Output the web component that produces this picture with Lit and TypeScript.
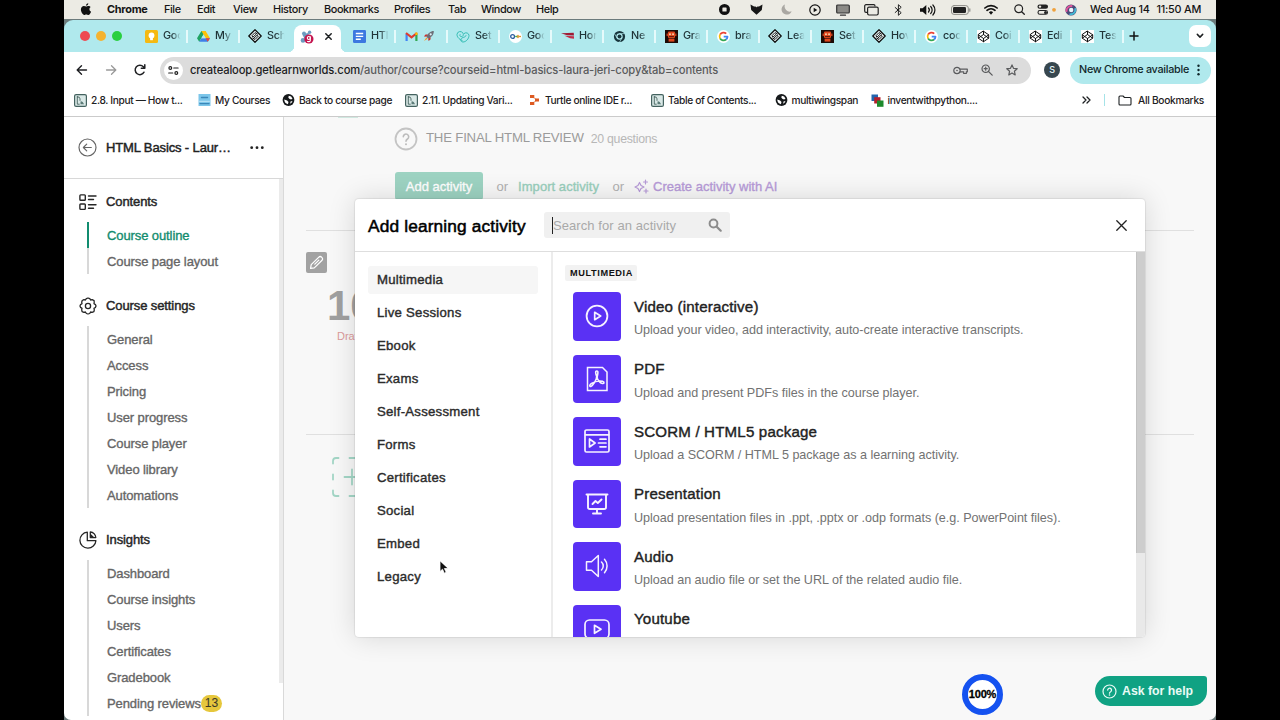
import { LitElement, html, css, svg, nothing } from "lit";
import { customElement } from "lit/decorators.js";
import { classMap } from "lit/directives/class-map.js";

const icon = (w: number, h: number, box: string, body: unknown) =>
  html`<svg width=${w} height=${h} viewBox=${box} fill="none" stroke="currentColor" stroke-linecap="round" stroke-linejoin="round">${body}</svg>`;

/* ---------- favicons ---------- */
const diamond = icon(14, 14, "0 0 14 14", svg`<path d="M7 .8 13.200 7 7 13.200.8 7Z" stroke="#111" stroke-width="1.300" fill="#f4feff"/><path d="M9.300 5.100 7 3.600 3.800 6.900 5 8.100 8 5.300M4.700 9 7 10.500 10.300 7.100 9.200 6.100 6.300 8.800" stroke="#111" stroke-width="1"/>`);
const google = icon(13, 13, "0 0 13 13", svg`<circle cx="6.5" cy="6.5" r="6.5" fill="#fff" stroke="none"/><g stroke-width="1.8" stroke-linecap="butt"><path d="M9.2 3.6A4 4 0 0 0 3.1 4.5" stroke="#ea4335"/><path d="M3.1 4.5a4 4 0 0 0 0 4" stroke="#fbbc05"/><path d="M3.1 8.5a4 4 0 0 0 6 1" stroke="#34a853"/><path d="M9.1 9.5a4 4 0 0 0 1.4-2.9H6.7" stroke="#4285f4"/></g>`);
const codepen = icon(13, 13, "0 0 13 13", svg`<rect width="13" height="13" fill="#fff" stroke="none"/><path d="M6.500 1.300 11.700 4.800v3.400L6.500 11.700 1.300 8.200V4.800ZM6.500 1.300v3.200M6.500 8.500v3.200M1.300 4.800l5.200 3.700L11.700 4.800M1.300 8.200l5.200-3.700 5.200 3.700" stroke="#111" stroke-width="1"/>`);
const robot = icon(13, 13, "0 0 13 13", svg`<rect width="13" height="13" fill="#1c0b06" stroke="none"/><g stroke="none" fill="#e0481e"><rect x="3" y="1.6" width="7" height="6.4" rx="1"/><rect x="1.6" y="3.5" width="1.2" height="2.6"/><rect x="10.2" y="3.5" width="1.2" height="2.6"/><rect x="3.6" y="8.6" width="5.8" height="3"/></g><rect x="4.1" y="3.4" width="1.7" height="1.7" fill="#f5d9b0" stroke="none"/><rect x="7.2" y="3.4" width="1.7" height="1.7" fill="#f5d9b0" stroke="none"/><path d="M4.4 6.6h4.2" stroke="#3a0f05" stroke-width=".8"/>`);
const keep = icon(13, 13, "0 0 13 13", svg`<rect width="13" height="13" rx="1.5" fill="#f5b912" stroke="none"/><circle cx="6.5" cy="5.4" r="2.9" fill="#fff" stroke="none"/><rect x="5.1" y="7.6" width="2.8" height="2.6" fill="#fff" stroke="none"/>`);
const drive = icon(13, 13, "0 0 13 13", svg`<g stroke="none"><path d="M4.4 1h4.2L4.3 8.2 2.2 11.8 0 8.2Z" fill="#1fa463"/><path d="M4.4 1h4.2L13 8.2H8.8Z" fill="#ffc107"/><path d="M4.4 8.2H13l-2.2 3.6H2.2Z" fill="#3f7ee8"/><path d="M10.8 11.8 8.7 8.2H13Z" fill="#ea4335"/><path d="M6.5 4.6 4.4 8.2h4.2Z" fill="#b0e9ed"/></g>`);
const loopMark = icon(14, 14, "0 0 14 14", svg`<g stroke="none"><circle cx="4" cy="3.3" r="1.9" fill="#6c9bc0"/><circle cx="9.6" cy="2.2" r="1.7" fill="#6c9bc0"/><path d="M2.2 4.6 9 2.8 8.4 6 4.8 9Z" fill="#6c9bc0"/><circle cx="3" cy="10.4" r="2.3" fill="#6c9bc0"/><circle cx="8.9" cy="9" r="4.6" fill="#c4154f"/></g><circle cx="8.8" cy="8" r="1.5" stroke="#fff" stroke-width="1.1"/><path d="M10.3 6.8v3.6q0 1.6-2.8 1.1" stroke="#fff" stroke-width="1.1"/>`);
const docs = icon(13, 13, "0 0 13 13", svg`<rect width="13" height="13" rx="1.2" fill="#3c78e0" stroke="none"/><path d="M2.8 3.5h7.4M2.8 6.4h7.4M2.8 9.3h5" stroke="#fff" stroke-width="1.4" stroke-linecap="butt"/>`);
const gmail = icon(13, 11, "0 0 13 11", svg`<g stroke-width="2.2" stroke-linecap="butt" stroke-linejoin="miter"><path d="M1.6 9.9V3" stroke="#4285f4"/><path d="M11.4 9.9V3" stroke="#34a853"/><path d="m1 2 5.5 4.4L12 2" stroke="#e03b2f"/><path d="M11.4 4V1.6" stroke="#fbbc04"/></g>`);
const rings = icon(14, 13, "0 0 14 13", svg`<g stroke="#35bcb4" stroke-width="1"><path d="M6.2 10.6C2.5 9 .9 6.600 1 4.400A3.200 3.200 0 0 1 7 3.200c.9 1.900-.1 3.400-1.700 3.400-1.300 0-1.800-1.100-1.300-2"/><path d="M8.200 3.400A3 3 0 0 1 13 5.400c0 3.200-2.900 6.600-6 6.600-2.300 0-2.900-2.600-1.200-3.900C7.700 6.800 9.300 7.600 10 5.600"/></g>`);
const keyFav = icon(13, 13, "0 0 13 13", svg`<circle cx="6.500" cy="6.500" r="6.500" fill="#fff" stroke="none"/><circle cx="3.600" cy="6.500" r="1.900" stroke="#2d5f9e" stroke-width="1.300"/><path d="M6.800 6.500h1.900" stroke="#4caf50" stroke-width="1.500"/><path d="M9 5.500v2M10.700 6.500h.6" stroke="#e0962d" stroke-width="1.600"/>`);
const flag = icon(13, 8, "0 0 13 8", svg`<path d="M0 1.200 12.700.8 13 3.400 6 3.200Z" fill="#a01c35" stroke="none"/><path d="M3.500 3.700 13 4.200v2.600L9 6.200Z" fill="#c2304a" stroke="none"/>`);
const chrome = icon(13, 13, "0 0 13 13", svg`<circle cx="6.500" cy="6.500" r="4.400" stroke="#18353c" stroke-width="2.400"/><circle cx="6.500" cy="6.500" r="2" fill="#18353c" stroke="none"/><path d="M6.500 3.600h4.700M4 7.900 1.800 4.200M9 7.900l-2.300 3.900" stroke="#b0e9ed" stroke-width=".7"/>`);
const rocket = icon(12, 12, "0 0 12 12", svg`<g stroke="none"><path d="M10.800 1C7.500 1 4.600 3.600 3.300 6.700l2 2C8.400 7.400 11 4.500 10.800 1Z" fill="#6d6f78"/><path d="M4.600 4.200 2 4.800 1.200 6.800l2.300-.2ZM7.800 7.400 7.200 10l-2 .8.2-2.300Z" fill="#c9302c"/><path d="m3.300 7.400 1.400 1.400L1 11Z" fill="#f39b2b"/><circle cx="7.700" cy="4.300" r="1.100" fill="#dff3fa"/></g>`);

interface Tab { fav: unknown; label: unknown; active?: boolean; sep?: boolean; }
const TABS: Tab[] = [
  { fav: keep, label: "Goo", sep: true },
  { fav: drive, label: "My", sep: true },
  { fav: diamond, label: "Sch" },
  { fav: loopMark, label: "", active: true },
  { fav: docs, label: "HTI", sep: true },
  { fav: gmail, label: rocket, sep: true },
  { fav: rings, label: "Set", sep: true },
  { fav: keyFav, label: "Goo", sep: true },
  { fav: flag, label: "Hor", sep: true },
  { fav: chrome, label: "Ne", sep: true },
  { fav: robot, label: "Gra", sep: true },
  { fav: google, label: "bra", sep: true },
  { fav: diamond, label: "Lea", sep: true },
  { fav: robot, label: "Set", sep: true },
  { fav: diamond, label: "Hov", sep: true },
  { fav: google, label: "coc", sep: true },
  { fav: codepen, label: "Coi", sep: true },
  { fav: codepen, label: "Edi", sep: true },
  { fav: codepen, label: "Tes", sep: true },
];

/* ---------- menu bar ---------- */
const MENUS: [string, number][] = [["Chrome", 57], ["File", 33], ["Edit", 36], ["View", 40], ["History", 51], ["Bookmarks", 70], ["Profiles", 54], ["Tab", 33], ["Window", 55], ["Help", 30]];

const STATUS: [unknown, number][] = [
  [icon(11, 11, "0 0 11 11", svg`<circle cx="5.500" cy="5.500" r="5.500" fill="#111" stroke="none"/><rect x="3.400" y="3.400" width="4.200" height="4.200" rx=".6" fill="#eceae3" stroke="none"/>`), 31],
  [icon(13, 11, "0 0 13 11", svg`<path d="M.5.500 4 2.600h5L12.500.500 11.800 6 6.500 10.800 1.200 6Z" fill="#161616" stroke="none"/><path d="M4.200 0 6.500 3.500 8.800 0Z" fill="#eceae3" stroke="none"/>`), 31],
  [icon(11, 11, "0 0 11 11", svg`<path d="M4 .5a5.200 5.200 0 1 0 6.600 6.800A5.200 5.200 0 0 1 4 .500Z" fill="#aaa8a3" stroke="none"/>`), 28],
  [icon(12, 12, "0 0 12 12", svg`<circle cx="6" cy="6" r="5.200" stroke="#111" stroke-width="1.200"/><path d="M4.700 3.700v4.600L8.300 6Z" fill="#111" stroke="none"/>`), 27],
  [icon(14, 12, "0 0 14 12", svg`<rect x=".7" y="1" width="12.600" height="8" rx="1" stroke="#333" stroke-width="1.200" fill="#8b8a86"/><path d="M4.500 11.200h5" stroke="#333" stroke-width="1.200"/>`), 28],
  [icon(15, 12, "0 0 15 12", svg`<path d="M3 8.400H2A1.300 1.300 0 0 1 .7 7.100V2A1.300 1.300 0 0 1 2 .7h7.800A1.300 1.300 0 0 1 11 2" stroke="#222" stroke-width="1.200"/><rect x="3.600" y="3.200" width="10.600" height="7.800" rx="1.400" stroke="#222" stroke-width="1.200"/>`), 30],
  [icon(9, 12, "0 0 9 12", svg`<path d="M1.200 3.500 7.200 8.700 4.400 11.300V.7L7.200 3.300 1.200 8.500" stroke="#222" stroke-width="1"/>`), 26],
  [icon(16, 12, "0 0 16 12", svg`<path d="M0 4.200h2.600L6.300 1v10L2.600 7.800H0Z" fill="#111" stroke="none"/><path d="M8.500 4a3 3 0 0 1 0 4M10.700 2.500a5 5 0 0 1 0 7M12.900 1a7.200 7.200 0 0 1 0 10" stroke="#111" stroke-width="1.200"/>`), 31],
  [icon(20, 10, "0 0 20 10", svg`<rect x=".5" y=".6" width="16.800" height="8.800" rx="2.500" stroke="#8d8c87" stroke-width="1"/><rect x="2" y="2" width="13" height="6" rx="1.300" fill="#222" stroke="none"/><path d="M18.800 3.800v2.400" stroke="#8d8c87" stroke-width="1.200"/>`), 33],
  [icon(14, 11, "0 0 14 11", svg`<path d="M.9 4A9 9 0 0 1 13.100 4M3 6.300a6 6 0 0 1 8 0" stroke="#111" stroke-width="1.700"/><path d="M4.900 8.200a3.300 3.300 0 0 1 4.200 0L7 10.700Z" fill="#111" stroke="none"/>`), 30],
  [icon(11, 11, "0 0 11 11", svg`<circle cx="4.700" cy="4.700" r="3.900" stroke="#222" stroke-width="1.200"/><path d="m7.700 7.700 2.600 2.600" stroke="#222" stroke-width="1.300"/>`), 23],
  [icon(20, 11, "0 0 20 11", svg`<rect x=".5" y=".5" width="10.500" height="4.300" rx="2.100" fill="#222" stroke="none"/><circle cx="3" cy="2.600" r="1.200" fill="#eceae3" stroke="none"/><rect x="1" y="6.500" width="9.500" height="3.800" rx="1.900" stroke="#222" stroke-width="1.100"/><circle cx="8.500" cy="8.400" r="1.500" fill="#222" stroke="none"/><circle cx="17" cy="5.800" r="1.900" fill="#f0a13c" stroke="none"/>`), 28],
  [icon(12, 12, "0 0 12 12", svg`<circle cx="6" cy="6" r="5.600" fill="#4d4a78" stroke="none"/><path d="M1.500 7a4.700 4.700 0 0 1 5-5" stroke="#e0559a" stroke-width="2"/><path d="M10.300 5a4.600 4.600 0 0 1-5 5.300" stroke="#43b9d4" stroke-width="2"/><circle cx="6.200" cy="6" r="2.200" fill="#e9f4fb" stroke="none"/>`), 25],
];

/* ---------- bookmarks ---------- */
const runestone = icon(13, 13, "0 0 13 13", svg`<rect x=".6" y=".6" width="11.800" height="11.800" rx="1.500" stroke="#44625f" stroke-width="1.200" fill="#d9e8e6"/><path d="M3.300 2.600v7.600h2M3.300 2.800q2.500-.4 2.700 2v1.600" stroke="#33504d" stroke-width=".8"/><path d="M6.500 10.300V7.500q2 -.8 3.600 2.800Z" fill="#5d7c79" stroke="none"/>`);
const courses = icon(12, 12, "0 0 12 12", svg`<rect width="12" height="12" fill="#7cc6ea" stroke="none"/><path d="M3 3.500h6M1.500 9.600h9" stroke="#3a86b8" stroke-width="1.400"/><path d="M1 7.300h10" stroke="#c9e9f8" stroke-width=".9"/>`);
const globe = icon(12, 12, "0 0 12 12", svg`<circle cx="6" cy="6" r="5.900" fill="#16191b" stroke="none"/><path d="M6.300 1.800q2.800.2 3.700 3l-1.500.8-1.700-.9-1-1.300ZM1.700 5.600l2.900.8 1.400 1.500-.6 2.400Q2 9.500 1.700 5.600ZM8 7.500l2-.4q-.7 2-2.300 2.700Z" fill="#fff" stroke="none"/>`);
const turtle = icon(11, 12, "0 0 11 12", svg`<path d="M2.500 2.500 8.500 6 2.500 9.500" stroke="#e9a27c" stroke-width="1"/><g fill="#dd5a22" stroke="none"><rect x="1" y="1" width="4.300" height="3"/><rect x="6" y="4.500" width="4" height="3"/><rect x="1" y="8" width="4.300" height="3"/></g>`);
const blocks = icon(13, 13, "0 0 13 13", svg`<g stroke="none"><rect x=".5" y=".5" width="6.500" height="6.500" fill="#2465ad"/><rect x="3.200" y="3.200" width="6.300" height="6.300" fill="#b3202b"/><rect x="6" y="6.500" width="6.500" height="6.300" fill="#1d8a2c"/></g>`);
const BOOKMARKS: [unknown, string, number][] = [
  [runestone, "2.8. Input — How t...", 124],
  [courses, "My Courses", 84],
  [globe, "Back to course page", 123],
  [runestone, "2.11. Updating Vari...", 123],
  [turtle, "Turtle online IDE r...", 123],
  [runestone, "Table of Contents...", 123.5],
  [globe, "multiwingspan", 96],
  [blocks, "inventwithpython....", 130],
];

/* ---------- sidebar ---------- */
const SECTIONS = [
  {
    title: "Contents",
    icon: icon(18, 17, "0 0 18 17", svg`<g stroke-width="1.400"><rect x=".9" y=".9" width="5.400" height="5.400" rx=".8"/><rect x=".9" y="10" width="5.400" height="5.400" rx=".8"/><path d="M9.500 2H17M9.500 5.500h5M9.500 10.800H17M9.500 14.300h5"/></g>`),
    items: ["Course outline", "Course page layout"],
  },
  {
    title: "Course settings",
    icon: icon(18, 18, "0 0 18 18", svg`<path d="M9 1 10.800 1.700 11.600 3 13.200 2.700 15.100 3.700 15.200 5.500 15 6.700 16.500 7.600 17 9 16.400 10.500 15 11.400 15.300 12.800 14.900 14.600 13.100 15.300 11.600 15 10.700 16.500 9 17 7.400 16.500 6.400 15 4.900 15.300 3.100 14.600 2.700 12.800 3 11.400 1.500 10.400 1 9 1.500 7.600 3 6.700 2.700 5.200 3.200 3.500 4.900 2.700 6.400 3 7.300 1.600Z" stroke-width="1.300"/><circle cx="9" cy="9" r="2.600" stroke-width="1.300"/>`),
    items: ["General", "Access", "Pricing", "User progress", "Course player", "Video library", "Automations"],
  },
  {
    title: "Insights",
    icon: icon(18, 18, "0 0 18 18", svg`<path d="M8.300 1.200A8 8 0 1 0 16.900 9.700H8.300Z" stroke-width="1.300"/><path d="M11.300 1v5.600h5.500A6 6 0 0 0 11.300 1ZM11.300 3.500l3.200 3" stroke-width="1.300"/>`),
    items: ["Dashboard", "Course insights", "Users", "Certificates", "Gradebook", "Pending reviews"],
  },
];

/* ---------- modal ---------- */
const CATEGORIES = ["Multimedia", "Live Sessions", "Ebook", "Exams", "Self-Assessment", "Forms", "Certificates", "Social", "Embed", "Legacy"];
const big = (body: unknown) => icon(26, 26, "0 0 26 26", body);
const ACTIVITIES: [string, string, unknown][] = [
  ["Video (interactive)", "Upload your video, add interactivity, auto-create interactive transcripts.", big(svg`<circle cx="13" cy="13" r="10.400" stroke-width="1.800"/><path d="M10.700 9.300v7.400l6-3.700Z" stroke-width="1.700"/>`)],
  ["PDF", "Upload and present PDFs files in the course player.", big(svg`<path d="M3.500 1.500H18.500L23 6V24.500H3.500Z" stroke-width="1.500" stroke-linejoin="miter"/><path d="M12.800 5c-1.700 0-1.200 3-.1 5.500.3 3-4 9.300-5.800 9.900-1.500.4-1.700-1.500.6-2.900 3-1.800 8.200-2.900 11-2.200 2.300.6 1.700 2.500-.2 2.200-2.400-.4-5.200-4-5.200-6.400C13.800 8 14.600 5 12.800 5Z" stroke-width="1.600"/>`)],
  ["SCORM / HTML5 package", "Upload a SCORM / HTML 5 package as a learning activity.", big(svg`<rect x="1" y="2" width="24" height="22" rx="1.500" stroke-width="1.700"/><path d="M1.500 6.800h23" stroke-width="1.800"/><path d="M5.500 11v8l5.600-4Z" stroke-width="1.700"/><path d="M16 11.200h6M14.500 15h7.500M16 18.800h6" stroke-width="1.700"/>`)],
  ["Presentation", "Upload presentation files in .ppt, .pptx or .odp formats (e.g. PowerPoint files).", big(svg`<path d="M2.500 3.500h21M4 3.500v12.700q0 1.800 1.800 1.800h14.400q1.800 0 1.800-1.800V3.500M13 18v4M9 22.500h8" stroke-width="1.900"/><path d="m8.500 13 3-3 2.300 2L17.500 8.500" stroke-width="1.900"/>`)],
  ["Audio", "Upload an audio file or set the URL of the related audio file.", big(svg`<path d="M2.500 8.800h5L14.300 2.500v21L7.500 17.200h-5Z" stroke-width="1.500"/><path d="M17.500 9a5.500 5.500 0 0 1 0 8M20.500 6.300a10 10 0 0 1 0 13.400" stroke-width="1.500"/>`)],
  ["Youtube", "", big(svg`<rect x="1" y="4" width="24" height="18.500" rx="4.500" stroke-width="1.700"/><path d="M10.500 9.300v8l6.500-4Z" stroke-width="1.700"/>`)],
];

@customElement("mac-menubar")
class MacMenubar extends LitElement {
  static styles = css`
    :host { display: flex; align-items: center; height: 19px; background: #ecebe4; color: #151515; font: 500 10.900px/19px Inter, "Liberation Sans", sans-serif; letter-spacing: -0.400px; white-space: nowrap; flex: none; border-bottom: 1px solid #6c7b7c; }
    .apple { width: 43px; padding-left: 15.500px; box-sizing: border-box; display: flex; }
    .menu { flex: none; }
    .menu.app { font-weight: 700; letter-spacing: -0.250px; }
    .status { display: flex; margin-left: auto; }
    .cell { display: flex; align-items: center; flex: none; }
    .clock { width: 126px; font-size: 10.800px; letter-spacing: -0.180px; }
    .clock span { margin-left: 4px; }
  `;
  render() {
    return html`
      <span class="apple">${icon(12, 13, "0 0 12 13", svg`<path d="M8.300.3c.1 1.200-1 2.500-2.200 2.500C5.900 1.600 7 .4 8.300.300ZM6.200 3.500c.6 0 1.300-.6 2.300-.6.900 0 1.700.5 2.200 1.200-1.900 1.100-1.500 3.900.4 4.600-.5 1.400-1.500 3.200-2.700 3.200-.8 0-1.100-.5-2.100-.5s-1.300.5-2.100.500C2.700 11.900.9 9 .9 6.600c0-2.400 1.500-3.600 2.900-3.600 1 0 1.800.5 2.400.5Z" fill="#111" stroke="none"/>`)}</span>
      ${MENUS.map(([m, w], i) => html`<span class=${classMap({ menu: true, app: i === 0 })} style="width:${w}px">${m}</span>`)}
      <div class="status">
        ${STATUS.map(([g, w]) => html`<span class="cell" style="width:${w}px">${g}</span>`)}
        <span class="clock">Wed Aug 14 <span>11:50 AM</span></span>
      </div>`;
  }
}

@customElement("browser-chrome")
class BrowserChrome extends LitElement {
  static styles = css`
    :host { display: block; flex: none; font: 500 11px/14px Inter, "Liberation Sans", sans-serif; color: #1d2022; letter-spacing: -0.1px; white-space: nowrap; }
    svg { flex: none; display: block; }
    .strip { height: 32px; background: #b0e9ed; display: flex; align-items: center; }
    .lights { width: 72px; box-sizing: border-box; padding-left: 16px; display: flex; gap: 6px; }
    .light { width: 10px; height: 10px; border-radius: 50%; }
    .r { background: #ee4b52; } .y { background: #f5b32f; } .g { background: #29cf3f; }
    .tab { width: 52px; height: 32px; display: flex; align-items: center; box-sizing: border-box; padding-left: 8px; flex: none; }
    .fav { width: 14px; display: flex; justify-content: center; flex: none; }
    .label { width: 20px; margin-left: 5px; -webkit-mask-image: linear-gradient(90deg, #000 45%, transparent 88%); font-size: 10.800px; letter-spacing: -0.200px; color: #203438; }
    .label.pic { -webkit-mask-image: none; }
    .sep { width: 1.500px; height: 13px; margin-left: 3px; background: #e6fafb; }
    .tab.active { align-items: flex-end; padding-left: 0; }
    .shape { display: flex; align-items: center; height: 27px; width: 47px; margin-left: 2px; box-sizing: border-box; padding: 0 9px 4px 6px; justify-content: space-between; background: #fff; border-radius: 8px 8px 0 0; position: relative; }
    .shape::before, .shape::after { content: ""; position: absolute; bottom: 0; width: 6px; height: 6px; }
    .shape::before { left: -6px; background: radial-gradient(circle at 0 0, transparent 6px, #fff 6.500px); }
    .shape::after { right: -6px; background: radial-gradient(circle at 100% 0, transparent 6px, #fff 6.500px); }
    .plus { margin-left: 5px; }
    .chev { margin: 0 5px 0 auto; width: 22px; height: 22px; border-radius: 7px; background: #fff; display: flex; align-items: center; justify-content: center; }
    .bar { height: 36px; background: #fff; display: flex; align-items: center; color: #202124; }
    .nav { display: flex; width: 96px; box-sizing: border-box; padding-left: 12px; gap: 17px; align-items: center; }
    .omni { width: 871px; height: 27px; border-radius: 14px; background: #dcdcdc; display: flex; align-items: center; box-sizing: border-box; padding: 0 13px 0 4px; font-size: 11.200px; color: #5a5b5d; letter-spacing: -0.130px; }
    .site { width: 19px; height: 19px; border-radius: 50%; background: #fff; display: flex; align-items: center; justify-content: center; margin-right: 7px; color: #222; }
    .host { color: #1c1d1f; }
    .tools { margin-left: auto; display: flex; gap: 13px; align-items: center; }
    .avatar { width: 16px; height: 16px; margin-left: 13px; border-radius: 50%; background: #37474f; color: #e6f4f5; text-align: center; font-size: 9px; line-height: 16px; }
    .update { margin-left: 10px; width: 141px; height: 27px; border-radius: 14px; background: #b0e9ed; box-sizing: border-box; padding: 0 11px 0 9px; display: flex; align-items: center; justify-content: space-between; color: #10282b; font-size: 10.800px; letter-spacing: -0.270px; }
    .marks { height: 24px; background: #fff; border-bottom: 1px solid #cbcbcb; display: flex; align-items: center; padding: 0 0 4px 10px; font-size: 10.200px; letter-spacing: -0.350px; }
    .mark { display: flex; align-items: center; gap: 4px; flex: none; }
    .mark svg { width: 13px; }
    .line { width: 1.500px; height: 12px; background: #a5e3e8; margin: 0 13px; }
    .all { display: flex; align-items: center; gap: 6px; margin-right: 12px; letter-spacing: -0.300px; }
    .end { margin-left: auto; display: flex; align-items: center; }
  `;
  render() {
    return html`
      <div class="strip">
        <div class="lights"><i class="light r"></i><i class="light y"></i><i class="light g"></i></div>
        ${TABS.map((t) => t.active
          ? html`<div class="tab active"><div class="shape">${t.fav}${icon(7, 7, "0 0 7 7", svg`<path d="m.8.800 5.400 5.400M6.200.800.800 6.200" stroke-width="1.500"/>`)}</div></div>`
          : html`<div class="tab"><span class="fav">${t.fav}</span><span class=${classMap({ label: true, pic: typeof t.label !== "string" })}>${t.label}</span>${t.sep ? html`<i class="sep"></i>` : nothing}</div>`)}
        <span class="plus">${icon(10, 10, "0 0 10 10", svg`<path d="M5 1v8M1 5h8" stroke="#111" stroke-width="1.500"/>`)}</span>
        <span class="chev">${icon(8, 6, "0 0 8 6", svg`<path d="m1.300 1.400 2.700 2.700 2.700-2.700" stroke-width="1.500"/>`)}</span>
      </div>
      <div class="bar">
        <div class="nav">
          ${icon(12, 12, "0 0 12 12", svg`<path d="M10.500 6H1.500M5.500 1.700 1.200 6l4.300 4.300" stroke-width="1.400"/>`)}
          ${icon(12, 12, "0 0 12 12", svg`<path d="M1.500 6h9M6.500 1.700 10.800 6 6.500 10.300" stroke="#9a9a9a" stroke-width="1.300"/>`)}
          ${icon(12, 12, "0 0 12 12", svg`<path d="M10 8.200a4.700 4.700 0 1 1-.6-5.400l1.200 1.300M10.800.8v3.500H7.300" stroke-width="1.500"/>`)}
        </div>
        <div class="omni">
          <span class="site">${icon(11, 9, "0 0 11 9", svg`<circle cx="2.300" cy="2" r="1.400" stroke-width="1.200"/><path d="M5.800 2h4.300M.7 7h4" stroke-width="1.200"/><circle cx="8.300" cy="7" r="1.400" stroke-width="1.200"/>`)}</span>
          <span><span class="host">createaloop.getlearnworlds.com</span>/author/course?courseid=html-basics-laura-jeri-copy&amp;tab=contents</span>
          <span class="tools">
            ${icon(15, 9, "0 0 15 9", svg`<circle cx="4" cy="4.500" r="3.200" stroke-width="1.200"/><circle cx="4" cy="4.500" r=".8" fill="currentColor" stroke="none"/><path d="M7 3.200h7.300v2.600h-1v1.700h-2.600V5.800H7" stroke-width="1.200"/>`)}
            ${icon(12, 12, "0 0 12 12", svg`<circle cx="4.700" cy="4.700" r="3.700" stroke-width="1.200"/><path d="m7.500 7.500 3.700 3.700M3.200 4.700h3M4.700 3.200v3" stroke-width="1.200"/>`)}
            ${icon(12, 12, "0 0 12 12", svg`<path d="m6 .9 1.500 3.400 3.700.4-2.800 2.500.8 3.700L6 9l-3.200 1.900.8-3.700L.8 4.700l3.700-.4Z" stroke-width="1.200"/>`)}
          </span>
        </div>
        <span class="avatar">S</span>
        <span class="update">New Chrome available ${icon(3, 12, "0 0 3 12", svg`<g fill="currentColor" stroke="none"><circle cx="1.500" cy="1.700" r="1.200"/><circle cx="1.500" cy="6" r="1.200"/><circle cx="1.500" cy="10.300" r="1.200"/></g>`)}</span>
      </div>
      <div class="marks">
        ${BOOKMARKS.map(([g, t, w]) => html`<span class="mark" style="width:${w}px">${g}<span>${t}</span></span>`)}
        <span class="end">
          ${icon(9, 8, "0 0 9 8", svg`<path d="m1 1 3 3-3 3M5 1l3 3-3 3" stroke-width="1.300"/>`)}
          <i class="line"></i>
          <span class="all">${icon(14, 11, "0 0 14 11", svg`<path d="M1 9V2Q1 1 2 1H5l1.500 1.500H12q1 0 1 1V9q0 1-1 1H2Q1 10 1 9Z" stroke-width="1.100"/>`)}<span>All Bookmarks</span></span>
        </span>
      </div>`;
  }
}

@customElement("course-sidebar")
class CourseSidebar extends LitElement {
  static styles = css`
    :host { display: flex; flex-direction: column; width: 220px; box-sizing: border-box; flex: none; background: #fff; border-right: 1px solid #d9d9d9; font: 13px/26px "Liberation Sans", Arial, sans-serif; letter-spacing: -0.100px; white-space: nowrap; overflow: hidden; }
    svg { display: block; flex: none; }
    .head { height: 61px; border-bottom: 1px solid #d8d8d8; display: flex; align-items: center; padding: 0 19px 0 14px; color: #222; flex: none; }
    .name { margin-left: 9px; font-size: 13px; letter-spacing: -0.130px; -webkit-text-stroke: 0.450px #222; }
    .dots { margin-left: auto; }
    .body { flex: 1; display: flex; min-height: 0; }
    .nav { flex: 1; padding-top: 3px; }
    .track { width: 4px; height: 504px; background: #ebebeb; }
    .title { height: 40px; display: flex; align-items: center; padding-left: 15px; gap: 9px; color: #262626; -webkit-text-stroke: 0.450px #262626; font-size: 13px; }
    .title svg { width: 18px; }
    .list { margin: 0 0 12px 23px; }
    .item { height: 26px; box-sizing: border-box; padding-top: 1px; display: flex; align-items: center; border-left: 2px solid #d8d8d8; padding-left: 18px; color: #666; -webkit-text-stroke: 0.350px #666; }
    .item.on { border-color: #118c6f; color: #128c6e; -webkit-text-stroke-color: #128c6e; }
    .badge { background: #e6c73c; color: #3c3820; -webkit-text-stroke-width: 0.100px; border-radius: 9px; line-height: 17px; width: 21px; text-align: center; font-size: 12px; }
  `;
  render() {
    return html`
      <div class="head">
        ${icon(19, 19, "0 0 19 19", svg`<g stroke="#666"><circle cx="9.500" cy="9.500" r="8.500" stroke-width="1.200"/><path d="M13.300 9.500H5.700M8.700 6.200 5.400 9.500l3.300 3.300" stroke-width="1.200"/></g>`)}
        <span class="name">HTML Basics - Laur…</span>
        <span class="dots">${icon(14, 4, "0 0 14 4", svg`<g fill="#222" stroke="none"><circle cx="1.700" cy="1.700" r="1.400"/><circle cx="7" cy="1.700" r="1.400"/><circle cx="12.300" cy="1.700" r="1.400"/></g>`)}</span>
      </div>
      <div class="body">
        <div class="nav">
          ${SECTIONS.map((s) => html`
            <div class="title">${s.icon}<span>${s.title}</span></div>
            <div class="list">
              ${s.items.map((t) => html`<div class=${classMap({ item: true, on: t === "Course outline" })}>${t}${t === "Pending reviews" ? html`<span class="badge">13</span>` : nothing}</div>`)}
            </div>`)}
        </div>
        <div class="track"></div>
      </div>`;
  }
}

@customElement("course-outline")
class CourseOutline extends LitElement {
  static styles = css`
    :host { display: block; flex: 1; background: #f8f8f8; overflow: hidden; font: 13px/16px "Liberation Sans", Arial, sans-serif; white-space: nowrap; padding: 0 22px; }
    svg { display: block; flex: none; }
    .stub { height: 1px; width: 20px; margin-left: 32px; background: #cfe8e0; }
    .unit { display: flex; align-items: center; padding: 9px 0 0 88px; height: 24px; color: #9b9b9b; }
    .unit .t { margin-left: 8px; margin-top: -2px; font-size: 13.200px; letter-spacing: -0.190px; }
    .unit .n { margin-left: 7px; color: #b7b7b7; font-size: 12.300px; letter-spacing: -0.270px; margin-top: -1px; }
    .acts { display: flex; align-items: center; margin: 21px 0 0 89px; height: 28px; color: #b0b0b0; }
    .add { width: 88px; height: 28px; line-height: 29px; border-radius: 3px; background: #9dd3c2; color: #fff; text-align: center; -webkit-text-stroke: 0.350px #fff; }
    .or { margin: 1px 10px 0 13.500px; }
    .imp { margin-top: 1px; color: #99cfbc; -webkit-text-stroke: 0.350px #99cfbc; letter-spacing: 0.050px; }
    .ai { margin-top: 1px; color: #b79bd8; -webkit-text-stroke: 0.350px #b79bd8; display: flex; gap: 4px; align-items: center; }
    .hr { height: 1px; background: #e0e0e0; width: 888px; }
    .hr.first { margin-top: 30px; }
    .section { height: 203px; padding-top: 21px; box-sizing: border-box; }
    .pen { width: 21px; height: 21px; border-radius: 2px; background: #a2a2a2; color: #fff; display: flex; align-items: center; justify-content: center; }
    .num { padding-left: 21px; margin-top: 11px; font: 700 42px/44px "Liberation Sans", Arial, sans-serif; color: #a0a0a0; }
    .draft { padding-left: 31px; margin-top: 1px; font-size: 11px; line-height: 14px; color: #dc9b9b; }
    .new { padding: 22px 0 0 26px; }
  `;
  render() {
    return html`
      <div class="stub"></div>
      <div class="unit">
        ${icon(24, 24, "0 0 24 24", svg`<circle cx="12" cy="12" r="10.500" stroke="#c4c4c4" stroke-width="1.800"/><path d="M9.300 9.800a2.700 2.700 0 1 1 4.200 2.200q-1.500 1-1.500 2.300" stroke="#bcbcbc" stroke-width="1.600"/><circle cx="12" cy="17.200" r="1" fill="#bcbcbc" stroke="none"/>`)}
        <span class="t">THE FINAL HTML REVIEW</span><span class="n">20 questions</span>
      </div>
      <div class="acts">
        <span class="add">Add activity</span><span class="or">or</span><span class="imp">Import activity</span><span class="or">or</span>
        <span class="ai">${icon(15, 15, "0 0 15 15", svg`<path d="M5.500 3.500 7 6.500 10 8 7 9.500 5.500 12.500 4 9.500 1 8 4 6.500ZM11.500 1v4M9.500 3h4M12 10v4M10 12h4" stroke-width="1.200"/>`)}<span>Create activity with AI</span></span>
      </div>
      <div class="hr first"></div>
      <div class="section">
        <div class="pen">${icon(15, 15, "0 0 15 15", svg`<path d="M1.600 13.400 2.200 9.700 9.600 2.300a2.250 2.250 0 0 1 3.200 3.200L5.300 12.900ZM9.800 5.200 5.800 9.200" stroke-width="1.200"/>`)}</div>
        <div class="num">10</div>
        <div class="draft">Draft</div>
      </div>
      <div class="hr"></div>
      <div class="new">${icon(40, 40, "0 0 40 40", svg`<g stroke="#a3d6c6" stroke-width="1.800"><path d="M6.500 1H4Q1 1 1 4v2.500M1 17.500v5M1 33.500V36q0 3 3 3h2.500M17.500 1h5M17.500 39h5M12.500 20h15M20 12.500v15"/></g>`)}</div>`;
  }
}

@customElement("activity-dialog")
class ActivityDialog extends LitElement {
  static styles = css`
    :host { display: flex; flex-direction: column; position: absolute; left: 291px; top: 199px; width: 790px; height: 438px; background: #fff; border-radius: 4px; box-shadow: 0 0 1px 1px rgba(0,0,0,.07), 0 0 28px rgba(0,0,0,.14); overflow: hidden; font: 13px/16px "Liberation Sans", Arial, sans-serif; white-space: nowrap; color: #222; }
    svg { display: block; flex: none; }
    .head { height: 52px; border-bottom: 1px solid #dedede; display: flex; align-items: center; padding: 0 18px 0 13px; flex: none; }
    .title { font-size: 17.300px; line-height: 22px; margin-top: 2px; letter-spacing: 0.150px; color: #000; -webkit-text-stroke: 0.500px #000; width: 176px; }
    .search { width: 186px; height: 26px; background: #f0f0f0; border-radius: 3px; display: flex; align-items: center; box-sizing: border-box; padding: 0 8px 0 8px; color: #a9a9a9; font-size: 13px; letter-spacing: 0.080px; }
    .caret { width: 1px; height: 17px; background: #222; }
    .search span { margin-top: 1px; }
    .search svg { margin-left: auto; }
    .close { margin-left: auto; }
    .body { display: flex; flex: 1; min-height: 0; }
    .cats { border-right: 2px solid #ececec; padding: 14px 13px 0; width: 170px; display: flex; flex-direction: column; gap: 5px; }
    .cat { height: 28px; line-height: 28px; padding-left: 9px; border-radius: 3px; color: #2c2c2c; -webkit-text-stroke: 0.400px #2c2c2c; font-size: 13.200px; letter-spacing: 0.240px; }
    .cat.on { background: #f6f6f6; }
    .panel { flex: 1; padding: 13px 0 0 12px; overflow: hidden; }
    .tag { display: inline-block; vertical-align: top; height: 16px; line-height: 17px; margin-bottom: 11px; background: #f2f2f2; border-radius: 2px; padding: 0 4px 0 5px; font-size: 9.200px; font-weight: 700; letter-spacing: 0.600px; color: #111; }
    .act { display: flex; height: 62.500px; margin-left: 8px; gap: 13px; }
    .tile { width: 48px; height: 48.500px; border-radius: 4px; background: #5a31f4; color: #f6f2ff; display: flex; align-items: center; justify-content: center; }
    .name { margin-top: 4.500px; font-size: 15.100px; line-height: 19px; letter-spacing: 0.170px; -webkit-text-stroke: 0.400px #222; }
    .desc { margin-top: 6.500px; color: #727272; font-size: 12.600px; letter-spacing: -0.030px; }
    .scroll { width: 9px; background: #e9e9e9; }
    .thumb { height: 301px; background: #cdcdcd; border-left: 1px solid #c2c2c2; }
  `;
  render() {
    return html`
      <div class="head">
        <span class="title">Add learning activity</span>
        <span class="search"><i class="caret"></i><span>Search for an activity</span>${icon(14, 14, "0 0 14 14", svg`<circle cx="5.500" cy="5.500" r="3.900" stroke="#8c8c8c" stroke-width="2"/><path d="m8.700 8.700 4 4" stroke="#8c8c8c" stroke-width="2.200"/>`)}</span>
        <span class="close">${icon(11, 11, "0 0 11 11", svg`<path d="m.8.800 9.400 9.400M10.200.800.800 10.200" stroke-width="1.300"/>`)}</span>
      </div>
      <div class="body">
        <div class="cats">${CATEGORIES.map((c, i) => html`<div class=${classMap({ cat: true, on: i === 0 })}>${c}</div>`)}</div>
        <div class="panel">
          <span class="tag">MULTIMEDIA</span>
          ${ACTIVITIES.map(([n, d, g]) => html`<div class="act"><div class="tile">${g}</div><div><div class="name">${n}</div>${d ? html`<div class="desc">${d}</div>` : nothing}</div></div>`)}
        </div>
        <div class="scroll"><div class="thumb"></div></div>
      </div>`;
  }
}

@customElement("app-root")
class AppRoot extends LitElement {
  static styles = css`
    :host { display: block; width: 1280px; height: 720px; background: #000; overflow: hidden; }
    .screen { position: relative; width: 1152px; height: 720px; margin: 0 auto; background: #6c7b7c; display: flex; flex-direction: column; overflow: hidden; }
    .window { flex: 1; min-height: 0; display: flex; flex-direction: column; border-radius: 9px 9px 7px 7px; overflow: hidden; }
    .page { flex: 1; min-height: 0; display: flex; }
    .score { position: absolute; left: 898px; top: 674px; width: 41px; height: 41px; box-sizing: border-box; border: 6px solid #1552f0; border-radius: 50%; background: #fff; font: 700 11px/29px "Liberation Sans", Arial, sans-serif; color: #000; display: flex; justify-content: center; letter-spacing: -0.200px; -webkit-text-stroke: 0.300px #000; }
    .help { position: absolute; left: 1031px; top: 676px; width: 112px; height: 30px; box-sizing: border-box; border-radius: 15px 3px 15px 15px; background: #10a283; color: #e9fbf6; display: flex; align-items: center; gap: 5px; padding-left: 7px; font: 700 12.300px/30px "Liberation Sans", Arial, sans-serif; white-space: nowrap; }
    .pointer { position: absolute; left: 375px; top: 560px; }
  `;
  render() {
    return html`
      <div class="screen">
        <mac-menubar></mac-menubar>
        <div class="window">
          <browser-chrome></browser-chrome>
          <div class="page">
            <course-sidebar></course-sidebar>
            <course-outline></course-outline>
          </div>
        </div>
        <activity-dialog></activity-dialog>
        <div class="score">100%</div>
        <div class="help">${icon(15, 15, "0 0 15 15", svg`<circle cx="7.500" cy="7.500" r="6.500" stroke-width="1.200"/><path d="M5.700 6.100a1.900 1.900 0 1 1 2.900 1.600q-1.100.6-1.100 1.500" stroke-width="1.300"/><circle cx="7.500" cy="11" r=".8" fill="currentColor" stroke="none"/>`)}<span>Ask for help</span></div>
        <div class="pointer">${icon(10, 15, "0 0 10 15", svg`<path d="M1 1v10.500l2.500-2.300 1.800 4 1.900-.9-1.800-3.800H9Z" fill="#111" stroke="#fff" stroke-width=".8"/>`)}</div>
      </div>`;
  }
}
